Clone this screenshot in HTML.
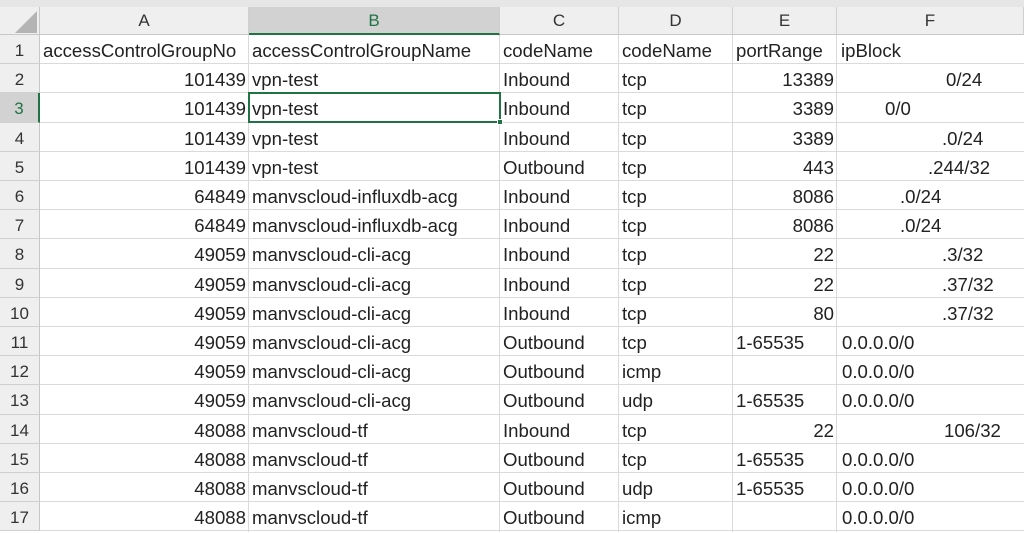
<!DOCTYPE html>
<html><head><meta charset="utf-8"><style>
*{margin:0;padding:0;box-sizing:border-box}
body{width:1024px;height:532px;overflow:hidden;background:#fff;font-family:"Liberation Sans",sans-serif;font-size:18.6px;color:#222;position:relative}
.a{position:absolute;white-space:nowrap}
.h{background:#efefef;color:#333;text-align:center;font-size:17px}
.v{position:absolute;top:7px;bottom:0;width:1px;background:#dadada}
.hl{position:absolute;left:0;right:0;height:1px;background:#dadada}
</style></head><body>
<div class="a" style="left:0;top:0;width:1024px;height:7px;background:#e6e6e6"></div>
<div id="g"></div>
<script>
var cols=[40,249,500,619,733,837,1024],L=['A','B','C','D','E','F'];
var T=35,H=29.2,h='';
h+='<div class="a h" style="left:0;top:7px;width:40px;height:28px;border-right:1px solid #c8c8c8;border-bottom:1px solid #c8c8c8"></div>';
h+='<div class="a" style="left:15px;top:11px;width:0;height:0;border-left:22px solid transparent;border-bottom:22px solid #b4b4b4"></div>';
for(var i=0;i<6;i++){var sel=i==1;h+='<div class="a h" style="left:'+cols[i]+'px;top:7px;width:'+(cols[i+1]-cols[i])+'px;height:28px;line-height:27px;border-right:1px solid #d0d0d0;border-bottom:'+(sel?'2px solid #217346':'1px solid #c8c8c8')+';'+(sel?'background:#d2d2d2;color:#217346':'')+'">'+L[i]+'</div>';}
var d=[
['accessControlGroupNo','accessControlGroupName','codeName','codeName','portRange','ipBlock',0,1],
['101439','vpn-test','Inbound','tcp','13389','0/24',946],
['101439','vpn-test','Inbound','tcp','3389','0/0',885],
['101439','vpn-test','Inbound','tcp','3389','.0/24',942],
['101439','vpn-test','Outbound','tcp','443','.244/32',928],
['64849','manvscloud-influxdb-acg','Inbound','tcp','8086','.0/24',900],
['64849','manvscloud-influxdb-acg','Inbound','tcp','8086','.0/24',900],
['49059','manvscloud-cli-acg','Inbound','tcp','22','.3/32',942],
['49059','manvscloud-cli-acg','Inbound','tcp','22','.37/32',942],
['49059','manvscloud-cli-acg','Inbound','tcp','80','.37/32',942],
['49059','manvscloud-cli-acg','Outbound','tcp','1-65535','0.0.0.0/0',842],
['49059','manvscloud-cli-acg','Outbound','icmp','','0.0.0.0/0',842],
['49059','manvscloud-cli-acg','Outbound','udp','1-65535','0.0.0.0/0',842],
['48088','manvscloud-tf','Inbound','tcp','22','106/32',944],
['48088','manvscloud-tf','Outbound','tcp','1-65535','0.0.0.0/0',842],
['48088','manvscloud-tf','Outbound','udp','1-65535','0.0.0.0/0',842],
['48088','manvscloud-tf','Outbound','icmp','','0.0.0.0/0',842]];
for(var r=0;r<17;r++){var y=T+r*H,s=r==2;
h+='<div class="a h" style="left:0;top:'+y+'px;width:40px;height:'+H+'px;line-height:'+(H+2)+'px;border-right:'+(s?'2px solid #217346':'1px solid #c8c8c8')+';border-bottom:1px solid #d0d0d0;'+(s?'background:#d2d2d2;color:#217346':'')+'">'+(r+1)+'</div>';
h+='<div class="hl" style="left:40px;top:'+(y+H-1)+'px"></div>';
var x=d[r];
for(var c=0;c<5;c++){var num=r>0&&(c==0||(c==4&&x[4].indexOf('-')<0));var w=cols[c+1]-cols[c];
h+='<div class="a" style="left:'+(cols[c]+(num?0:3))+'px;top:'+(y+5)+'px;width:'+(w-3)+'px;text-align:'+(num?'right':'left')+'">'+x[c]+'</div>';}
h+='<div class="a" style="left:'+(r==0?841:x[6])+'px;top:'+(y+5)+'px">'+x[5]+'</div>';}
for(var i=1;i<6;i++)h+='<div class="v" style="left:'+(cols[i]-1)+'px;top:35px"></div>';
h+='<div class="a" style="left:248px;top:'+(T+2*H-1)+'px;width:253px;height:'+(H+1)+'px;border:2px solid #217346"></div>';
h+='<div class="a" style="left:497px;top:'+(T+3*H-4)+'px;width:6px;height:6px;background:#217346;border:1px solid #fff"></div>';
document.getElementById('g').innerHTML=h;
</script>
</body></html>
